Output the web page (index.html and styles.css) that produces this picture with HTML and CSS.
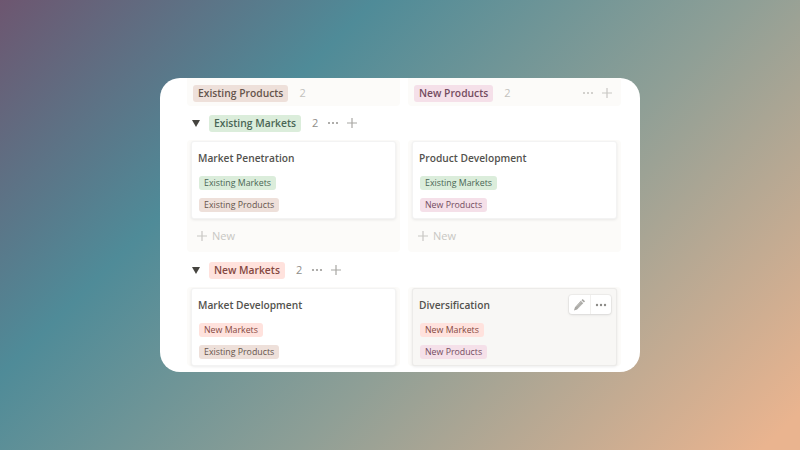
FILE: index.html
```html
<!DOCTYPE html>
<html lang="en">
  <head>
    <meta charset="UTF-8" />
    <title>Ansoff Matrix</title>
    <link rel="stylesheet" href="styles.css">
  </head>
  <body>
    <div class="panel">
      <div class="board-head">
        <div class="col-head">
          <span class="tag tag-brown tag-big">Existing Products</span>
          <span class="count light">2</span>
        </div>
        <div class="col-head">
          <span class="tag tag-pink tag-big">New Products</span>
          <span class="count light">2</span>
          <span class="head-tools">
            <svg class="dots" viewBox="0 0 12 4"><circle cx="2" cy="2" r="1.1"/><circle cx="6" cy="2" r="1.1"/><circle cx="10" cy="2" r="1.1"/></svg>
            <svg class="plus" viewBox="0 0 12 12"><path d="M6 1v10M1 6h10"/></svg>
          </span>
        </div>
      </div>

      <div class="group-head">
        <span class="arrow"></span>
        <span class="tag tag-green tag-big">Existing Markets</span>
        <span class="count">2</span>
        <svg class="dots" viewBox="0 0 12 4"><circle cx="2" cy="2" r="1.1"/><circle cx="6" cy="2" r="1.1"/><circle cx="10" cy="2" r="1.1"/></svg>
        <svg class="plus" viewBox="0 0 12 12"><path d="M6 1v10M1 6h10"/></svg>
      </div>
      <div class="row">
        <div class="cell">
          <div class="card">
            <div class="card-title">Market Penetration</div>
            <div><span class="tag tag-green">Existing Markets</span></div>
            <div><span class="tag tag-brown">Existing Products</span></div>
          </div>
          <div class="new-row">
            <svg class="plus" viewBox="0 0 12 12"><path d="M6 1v10M1 6h10"/></svg>
            <span>New</span>
          </div>
        </div>
        <div class="cell">
          <div class="card">
            <div class="card-title">Product Development</div>
            <div><span class="tag tag-green">Existing Markets</span></div>
            <div><span class="tag tag-pink">New Products</span></div>
          </div>
          <div class="new-row">
            <svg class="plus" viewBox="0 0 12 12"><path d="M6 1v10M1 6h10"/></svg>
            <span>New</span>
          </div>
        </div>
      </div>

      <div class="group-head">
        <span class="arrow"></span>
        <span class="tag tag-red tag-big">New Markets</span>
        <span class="count">2</span>
        <svg class="dots" viewBox="0 0 12 4"><circle cx="2" cy="2" r="1.1"/><circle cx="6" cy="2" r="1.1"/><circle cx="10" cy="2" r="1.1"/></svg>
        <svg class="plus" viewBox="0 0 12 12"><path d="M6 1v10M1 6h10"/></svg>
      </div>
      <div class="row">
        <div class="cell">
          <div class="card">
            <div class="card-title">Market Development</div>
            <div><span class="tag tag-red">New Markets</span></div>
            <div><span class="tag tag-brown">Existing Products</span></div>
          </div>
        </div>
        <div class="cell">
          <div class="card card-hover">
            <div class="card-title">Diversification</div>
            <div><span class="tag tag-red">New Markets</span></div>
            <div><span class="tag tag-pink">New Products</span></div>
            <div class="card-tools">
              <span class="tool">
                <svg class="pencil" viewBox="0 0 14 14"><path d="M10.4 1l2.6 2.6-1.3 1.3-2.6-2.6zM8.4 3l2.6 2.6-6.6 6.7-3.4 1.2 1.1-3.6z"/><path class="pencil-line" d="M4 9.200l4.800-4.800M5.300 10.500l4.300-4.300"/></svg>
              </span>
              <span class="tool">
                <svg class="dots" viewBox="0 0 12 4"><circle cx="2" cy="2" r="1.2"/><circle cx="6" cy="2" r="1.2"/><circle cx="10" cy="2" r="1.2"/></svg>
              </span>
            </div>
          </div>
        </div>
      </div>
    </div>
  </body>
</html>
```

FILE: styles.css
```css
* {
  margin: 0;
  padding: 0;
  box-sizing: border-box;
}

body {
  width: 800px;
  height: 450px;
  overflow: hidden;
  display: flex;
  justify-content: center;
  padding-top: 78px;
  font-family: "Open Sans", "Noto Sans", sans-serif;
  background: linear-gradient(135deg, #6d5670 0%, #4f8b98 30%, #8f9f96 60%, #eab48f 97%);
  color: #4a4945;
}

.panel {
  width: 480px;
  height: 294px;
  padding: 0 19px 0 27px;
  background-color: #fff;
  border-radius: 20px;
  overflow: hidden;
}

.board-head,
.row {
  display: flex;
  gap: 8px;
}

.row {
  margin-bottom: 1px;
}

.col-head {
  width: 213px;
  height: 28px;
  padding: 7px 8px 0 6px;
  display: flex;
  align-items: flex-start;
  background-color: #fcfbf9;
  border-radius: 0 0 4px 4px;
}

.tag {
  display: inline-block;
  height: 14px;
  line-height: 14px;
  padding: 0 5px;
  border-radius: 3px;
  font-size: 8.8px;
  white-space: nowrap;
}

.tag-big {
  height: 17px;
  line-height: 16px;
  font-size: 10.3px;
  font-weight: 600;
}

.tag-brown {
  background-color: #eee0da;
  color: #65544c;
}

.tag-pink {
  background-color: #f5e0e9;
  color: #744c60;
}

.tag-green {
  background-color: #dbeddb;
  color: #4a6655;
}

.tag-red {
  background-color: #ffe2dd;
  color: #844841;
}

.count {
  font-size: 11px;
  line-height: 16px;
  color: #8f8e8a;
  margin-left: 11px;
}

.count.light {
  color: #c2c1bd;
}

.dots {
  width: 12px;
  height: 4px;
  fill: #9b9a97;
}

.plus {
  width: 12px;
  height: 12px;
  fill: none;
  stroke: #a8a7a3;
  stroke-width: 1.2;
}

.head-tools {
  margin-left: auto;
  height: 16px;
  display: flex;
  align-items: center;
  gap: 7px;
}

.head-tools .dots {
  fill: #c8c7c3;
}

.head-tools .plus {
  stroke: #c8c7c3;
}

.group-head {
  height: 34px;
  padding-left: 5px;
  display: flex;
  align-items: center;
}

.group-head .tag {
  margin-left: 9px;
}

.group-head .dots {
  margin-left: 9px;
}

.group-head .plus {
  margin-left: 7px;
}

.arrow {
  width: 0;
  height: 0;
  border-left: 4px solid transparent;
  border-right: 4px solid transparent;
  border-top: 7px solid #45443f;
}

.cell {
  width: 213px;
  padding: 1px 4px 0;
  background-color: #fcfbf9;
  border-radius: 4px;
}

.card {
  position: relative;
  height: 78px;
  padding: 8px 6px 0;
  background-color: #fff;
  border: 1px solid rgba(15, 15, 15, 0.05);
  border-radius: 3px;
  box-shadow: 0 1px 3px rgba(15, 15, 15, 0.08);
}

.card > div {
  height: 22px;
  padding-left: 1px;
}

.card .card-title {
  height: 19px;
  padding-left: 0;
  font-size: 10.2px;
  font-weight: 600;
  line-height: 16px;
  color: #53524e;
}

.card-hover {
  background-color: #f8f7f5;
}

.card .card-tools {
  position: absolute;
  top: 6px;
  right: 5px;
  height: 19px;
  padding: 0;
  display: flex;
  background-color: #fff;
  border-radius: 3px;
  box-shadow: 0 0 0 1px rgba(15, 15, 15, 0.04), 0 1px 3px rgba(15, 15, 15, 0.1);
}

.tool {
  width: 21px;
  display: flex;
  align-items: center;
  justify-content: center;
}

.tool + .tool {
  border-left: 1px solid #f1f0ee;
}

.pencil {
  width: 13px;
  height: 13px;
  fill: #a9a8a4;
}

.pencil-line {
  fill: none;
  stroke: #d6d5d2;
  stroke-width: 0.6;
}

.tool .dots {
  fill: #8c8b87;
}

.new-row {
  height: 33px;
  padding-left: 5px;
  display: flex;
  align-items: center;
  gap: 4px;
  font-size: 11px;
  color: #c8c7c3;
}

.new-row .plus {
  stroke: #c8c7c3;
}
```
